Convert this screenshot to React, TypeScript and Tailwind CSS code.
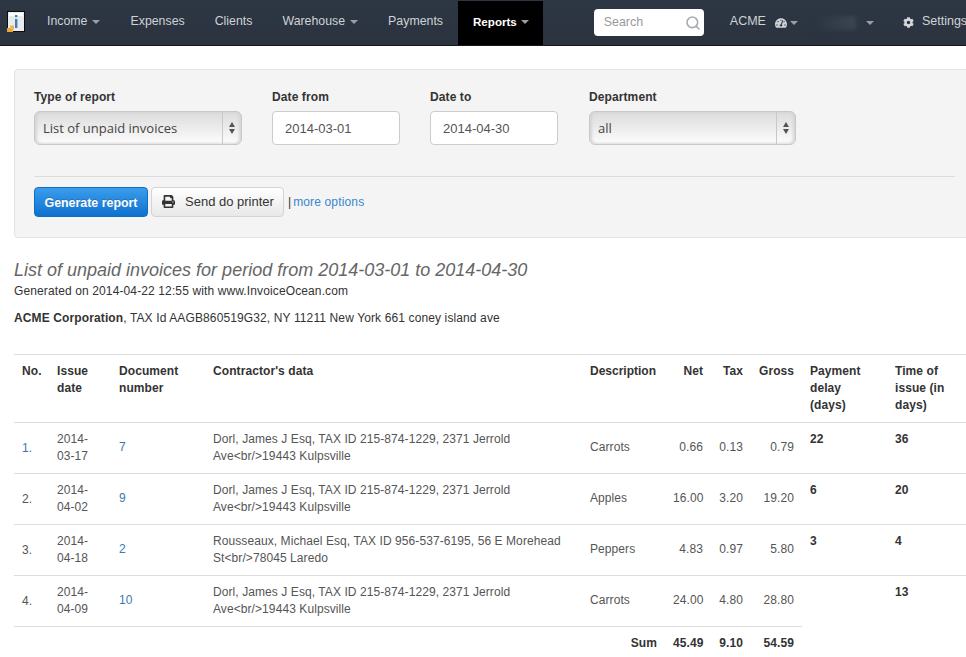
import { FaPrint, FaCog, FaTachometerAlt } from "react-icons/fa";
import { Search } from "lucide-react";

const Caret = ({ className = "" }: { className?: string }) => (
  <span className={`inline-block shrink-0 w-0 h-0 border-x-[4px] border-x-transparent border-t-[4px] border-t-[#9a9fa6] ${className}`} />
);

const NavItem = ({ label, caret, active }: { label: string; caret?: boolean; active?: boolean }) => (
  <a className={`flex items-center h-[44px] pb-[2px] ${active ? "pl-[15px] pr-[14px] bg-black text-white font-bold text-[11.6px]" : "px-[15px] text-[#cfd2d6] text-[12.35px]"}`}>
    {label}
    {caret && <Caret className={`${active ? "ml-[4px]" : "ml-[5px]"} mt-[1px]`} />}
  </a>
);

const Logo = () => (
  <svg width="18" height="22" viewBox="0 0 18 22" className="ml-[7px] mt-[-1px] shrink-0">
    <rect x="0.5" y="0.5" width="17" height="20" fill="#e8ebee" stroke="#0b0d10" />
    <rect x="2" y="2" width="14" height="3" fill="#fff" />
    <rect x="8" y="4" width="2.4" height="2.2" fill="#3f7fb5" />
    <rect x="8" y="8" width="2.4" height="9" fill="#3f7fb5" />
    <rect x="0" y="17" width="6" height="4" fill="#e9a53a" />
    <rect x="3" y="14.5" width="4" height="4" fill="#f0b54c" />
  </svg>
);

const Aqua = ({ text, width }: { text: string; width: string }) => (
  <div className={`${width} h-[34px] flex rounded-[6px] border border-[#c8c8c8] bg-gradient-to-b from-[#dcdcdc] via-[#ececec] to-[#fdfdfd] shadow-[inset_2px_0_3px_#d4d4d4,inset_-2px_0_3px_#d4d4d4]`}>
    <div className="flex-1 flex items-center pl-[8px] text-[13px] text-[#444] font-['Open_Sans',sans-serif]">{text}</div>
    <div className="w-[19px] border-l border-[#c8c8c8] flex flex-col items-center justify-center gap-[2px]">
      <span className="w-0 h-0 border-x-[3.5px] border-x-transparent border-b-[5px] border-b-[#555]" />
      <span className="w-0 h-0 border-x-[3.5px] border-x-transparent border-t-[5px] border-t-[#555]" />
    </div>
  </div>
);

const Field = ({ label, children, className = "" }: { label: string; children: React.ReactNode; className?: string }) => (
  <div className={className}>
    <div className="text-[12px] font-bold text-[#333] leading-[17px] mb-[5px] tracking-[0.1px]">{label}</div>
    {children}
  </div>
);

const DateInput = ({ value }: { value: string }) => (
  <div className="w-[128px] h-[34px] flex items-center px-[12px] rounded-[4px] border border-[#ccc] bg-white text-[13px] text-[#555]">{value}</div>
);

const rows = [
  { n: "1.", d: ["2014-", "03-17"], doc: "7", c: ["Dorl, James J Esq, TAX ID 215-874-1229, 2371 Jerrold", "Ave<br/>19443 Kulpsville"], desc: "Carrots", net: "0.66", tax: "0.13", gross: "0.79", delay: "22", time: "36" },
  { n: "2.", d: ["2014-", "04-02"], doc: "9", c: ["Dorl, James J Esq, TAX ID 215-874-1229, 2371 Jerrold", "Ave<br/>19443 Kulpsville"], desc: "Apples", net: "16.00", tax: "3.20", gross: "19.20", delay: "6", time: "20" },
  { n: "3.", d: ["2014-", "04-18"], doc: "2", c: ["Rousseaux, Michael Esq, TAX ID 956-537-6195, 56 E Morehead", "St<br/>78045 Laredo"], desc: "Peppers", net: "4.83", tax: "0.97", gross: "5.80", delay: "3", time: "4" },
  { n: "4.", d: ["2014-", "04-09"], doc: "10", c: ["Dorl, James J Esq, TAX ID 215-874-1229, 2371 Jerrold", "Ave<br/>19443 Kulpsville"], desc: "Carrots", net: "24.00", tax: "4.80", gross: "28.80", delay: "", time: "13" },
];

const td = "px-[8px] py-[8px] border-t border-[#ddd]";
const tdm = "px-[8px] pt-[7px] pb-[9px] border-t border-[#ddd]";
const th = "px-[8px] py-[8px] border-t border-[#ddd] text-left align-top font-bold text-[#333]";

export default function App() {
  return (
    <div className="h-[657px] w-[966px] overflow-hidden bg-white font-['Liberation_Sans',Arial,sans-serif] text-[12px] leading-[17px] text-[#555]">
      <nav className="h-[46px] flex items-center border-b border-[#14181d] bg-gradient-to-b from-[#2d3744] to-[#2a333e]">
        <Logo />
        <div className="flex items-center ml-[7px] h-[45px] shrink-0">
          <NavItem label="Income" caret />
          <NavItem label="Expenses" />
          <NavItem label="Clients" />
          <NavItem label="Warehouse" caret />
          <NavItem label="Payments" />
          <NavItem label="Reports" caret active />
        </div>
        <div className="ml-[51px] w-[110px] h-[27px] shrink-0 rounded-[4px] bg-white flex items-center justify-between pl-[10px] pr-[3px] text-[12.4px] text-[#999]">
          Search
          <Search size={16} className="text-[#a3adb8]" strokeWidth={2.4} />
        </div>
        <span className="ml-[26px] pb-[2px] text-[12.5px] text-[#cfd2d6]">ACME</span>
        <FaTachometerAlt className="ml-[9px] shrink-0 text-[#cfd2d6]" size={12} />
        <Caret className="ml-[3px]" />
        <div className="ml-[18px] w-[40px] h-[14px] shrink-0 bg-gradient-to-r from-[#2c3542] to-[#3c4552] blur-[2px]" />
        <Caret className="ml-[10px]" />
        <FaCog className="ml-[29px] shrink-0 text-[#d5d7da]" size={11} />
        <span className="ml-[8px] pb-[2px] text-[12.5px] text-[#cfd2d6] whitespace-nowrap">Settings</span>
      </nav>

      <div className="pl-[14px] pt-[23px]">
        <section className="w-[970px] h-[169px] rounded-l-[4px] border border-[#e3e3e3] bg-[#f4f4f4] pl-[19px] pt-[19px]">
          <div className="flex">
            <Field label="Type of report" className="w-[238px]">
              <Aqua text="List of unpaid invoices" width="w-[208px]" />
            </Field>
            <Field label="Date from" className="w-[158px]">
              <DateInput value="2014-03-01" />
            </Field>
            <Field label="Date to" className="w-[159px]">
              <DateInput value="2014-04-30" />
            </Field>
            <Field label="Department">
              <Aqua text="all" width="w-[207px]" />
            </Field>
          </div>
          <hr className="w-[921px] mt-[31px] border-t border-[#dcdcdc]" />
          <div className="flex items-center mt-[10px]">
            <button className="w-[114px] h-[30px] rounded-[4px] border border-[#0d6fc0] bg-gradient-to-b from-[#3a9cec] to-[#0a72cf] text-white text-[12.4px] font-bold pt-[2px] [text-shadow:0_-1px_0_rgba(0,0,0,0.2)]">
              Generate report
            </button>
            <button className="ml-[3px] w-[133px] h-[30px] rounded-[4px] border border-[#d4d4d4] bg-gradient-to-b from-white to-[#e8e8e8] text-[13px] text-[#333] flex items-center pl-[10px] pb-[2px]">
              <FaPrint size={13} />
              <span className="ml-[10px]">Send do printer</span>
            </button>
            <span className="ml-[4px] text-[#333]">|</span>
            <a className="ml-[2px] text-[#3a87cf] tracking-[0.15px]">more options</a>
          </div>
        </section>

        <h1 className="mt-[21px] text-[18px] leading-[22px] italic text-[#666]">List of unpaid invoices for period from 2014-03-01 to 2014-04-30</h1>
        <p className="mt-[2px] leading-[17px] text-[#333] tracking-[0.12px]">Generated on 2014-04-22 12:55 with www.InvoiceOcean.com</p>
        <p className="mt-[10px] text-[#333] tracking-[0.12px]"><b>ACME Corporation</b>, TAX Id AAGB860519G32, NY 11211 New York 661 coney island ave</p>

        <table className="mt-[27px] w-[958px] table-fixed border-collapse tracking-[0.08px]">
          <colgroup>
            <col className="w-[35px]" />
            <col className="w-[62px]" />
            <col className="w-[94px]" />
            <col className="w-[377px]" />
            <col className="w-[83px]" />
            <col className="w-[46px]" />
            <col className="w-[40px]" />
            <col className="w-[51px]" />
            <col className="w-[85px]" />
            <col className="w-[85px]" />
          </colgroup>
          <thead>
            <tr>
              <th className={th}>No.</th>
              <th className={th}>Issue date</th>
              <th className={th}>Document number</th>
              <th className={th}>Contractor's data</th>
              <th className={`${th} whitespace-nowrap tracking-normal`}>Description</th>
              <th className={`${th} !text-right`}>Net</th>
              <th className={`${th} !text-right`}>Tax</th>
              <th className={`${th} !text-right`}>Gross</th>
              <th className={th}>Payment delay (days)</th>
              <th className={th}>Time of issue (in days)</th>
            </tr>
          </thead>
          <tbody>
            {rows.map((r) => (
              <tr key={r.n}>
                <td className={`${td} ${r.n === "1." ? "text-[#3a78b0]" : ""}`}>{r.n}</td>
                <td className={td}>{r.d[0]}<br />{r.d[1]}</td>
                <td className={`${tdm} text-[#3a78b0]`}>{r.doc}</td>
                <td className={`${td} whitespace-nowrap`}>{r.c[0]}<br />{r.c[1]}</td>
                <td className={tdm}>{r.desc}</td>
                <td className={`${tdm} text-right`}>{r.net}</td>
                <td className={`${tdm} text-right`}>{r.tax}</td>
                <td className={`${tdm} text-right`}>{r.gross}</td>
                <td className={`${td} align-top font-bold text-[#333]`}>{r.delay}</td>
                <td className={`${td} align-top font-bold text-[#333]`}>{r.time}</td>
              </tr>
            ))}
            <tr className="font-bold text-[#333]">
              <td colSpan={5} className={`${td} text-right`}>Sum</td>
              <td className={`${td} text-right`}>45.49</td>
              <td className={`${td} text-right`}>9.10</td>
              <td className={`${td} text-right`}>54.59</td>
              <td />
              <td />
            </tr>
          </tbody>
        </table>
      </div>
    </div>
  );
}
